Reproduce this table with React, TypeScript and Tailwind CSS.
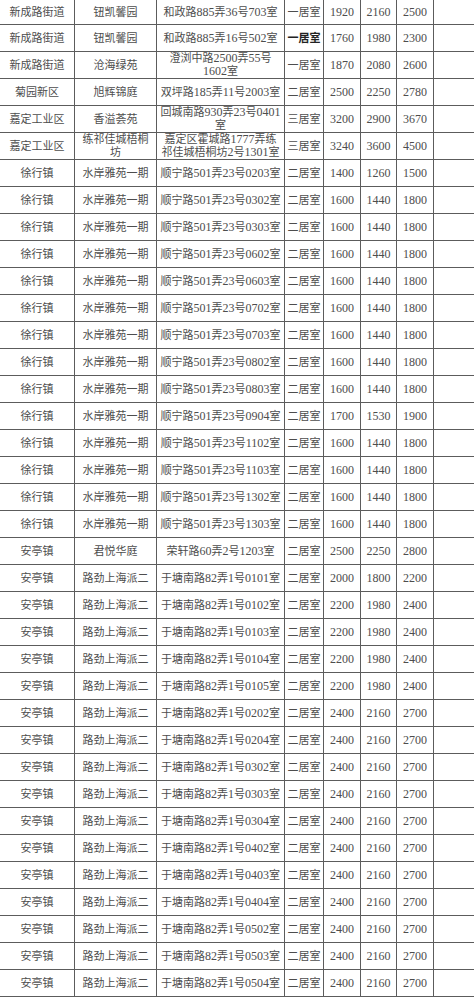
const FONT = { fontFamily: "'Liberation Serif', 'Noto Sans CJK SC', serif" }

type Row = [string, string, string, string, string, string, string]

// "|" marks where the cell text wraps to a second line
const rows: Row[] = [
  ['新成路街道', '钮凯馨园', '和政路885弄36号703室', '一居室', '1920', '2160', '2500'],
  ['新成路街道', '钮凯馨园', '和政路885弄16号502室', '一居室', '1760', '1980', '2300'],
  ['新成路街道', '沧海绿苑', '澄浏中路2500弄55号|1602室', '一居室', '1870', '2080', '2600'],
  ['菊园新区', '旭辉锦庭', '双坪路185弄11号2003室', '二居室', '2500', '2250', '2780'],
  ['嘉定工业区', '香溢荟苑', '回城南路930弄23号0401|室', '三居室', '3200', '2900', '3670'],
  ['嘉定工业区', '练祁佳城梧桐|坊', '嘉定区霍城路1777弄练|祁佳城梧桐坊2号1301室', '三居室', '3240', '3600', '4500'],
]

const xuhang: [string, string, string, string][] = [
  ['0203', '1400', '1260', '1500'],
  ['0302', '1600', '1440', '1800'],
  ['0303', '1600', '1440', '1800'],
  ['0602', '1600', '1440', '1800'],
  ['0603', '1600', '1440', '1800'],
  ['0702', '1600', '1440', '1800'],
  ['0703', '1600', '1440', '1800'],
  ['0802', '1600', '1440', '1800'],
  ['0803', '1600', '1440', '1800'],
  ['0904', '1700', '1530', '1900'],
  ['1102', '1600', '1440', '1800'],
  ['1103', '1600', '1440', '1800'],
  ['1302', '1600', '1440', '1800'],
  ['1303', '1600', '1440', '1800'],
]
xuhang.forEach(([room, a, b, c]) => rows.push(['徐行镇', '水岸雅苑一期', `顺宁路501弄23号${room}室`, '二居室', a, b, c]))

rows.push(['安亭镇', '君悦华庭', '荣轩路60弄2号1203室', '二居室', '2500', '2250', '2800'])

const anting: [string, string, string, string][] = [
  ['0101', '2000', '1800', '2200'],
  ['0102', '2200', '1980', '2400'],
  ['0103', '2200', '1980', '2400'],
  ['0104', '2200', '1980', '2400'],
  ['0105', '2200', '1980', '2400'],
  ['0202', '2400', '2160', '2700'],
  ['0204', '2400', '2160', '2700'],
  ['0302', '2400', '2160', '2700'],
  ['0303', '2400', '2160', '2700'],
  ['0304', '2400', '2160', '2700'],
  ['0402', '2400', '2160', '2700'],
  ['0403', '2400', '2160', '2700'],
  ['0404', '2400', '2160', '2700'],
  ['0502', '2400', '2160', '2700'],
  ['0503', '2400', '2160', '2700'],
  ['0504', '2400', '2160', '2700'],
]
anting.forEach(([room, a, b, c]) => rows.push(['安亭镇', '路劲上海派二', `于塘南路82弄1号${room}室`, '二居室', a, b, c]))

const cell = 'flex flex-col items-center justify-center text-center overflow-hidden border-r border-[#5c5c5c]'

// digits in the address look a touch bigger than the CJK glyphs
function Lines({ text, digits }: { text: string; digits?: boolean }) {
  return (
    <>
      {text.split('|').map((line, li) => (
        <div key={li} className="whitespace-nowrap">
          {digits
            ? line.split(/(\d+)/).map((part, i) =>
                /^\d+$/.test(part) ? (
                  <span key={i} className="text-[12px]">{part}</span>
                ) : (
                  part
                ),
              )
            : line}
        </div>
      ))}
    </>
  )
}

export default function App() {
  return (
    <div className="w-[474px] bg-white text-[11px] leading-[13px] text-[#4d4d4d]" style={FONT}>
      {rows.map((r, i) => (
        <div
          key={i}
          className={`grid grid-cols-[75px_82px_128px_39px_37px_36px_37px_1fr] border-b border-[#5c5c5c] ${i === 0 ? 'h-[25px]' : 'h-[27px]'}`}
        >
          <div className={cell}>{r[0]}</div>
          <div className={cell}>
            <Lines text={r[1]} />
          </div>
          <div className={cell}>
            <Lines text={r[2]} digits />
          </div>
          <div className={`${cell} whitespace-nowrap ${i === 1 ? 'font-bold text-[#222]' : ''}`}>{r[3]}</div>
          <div className={`${cell} text-[12px]`}>{r[4]}</div>
          <div className={`${cell} text-[12px]`}>{r[5]}</div>
          <div className={`${cell} text-[12px]`}>{r[6]}</div>
          <div />
        </div>
      ))}
      <div className="h-[2px] bg-[#e8e8e8]" />
    </div>
  )
}
